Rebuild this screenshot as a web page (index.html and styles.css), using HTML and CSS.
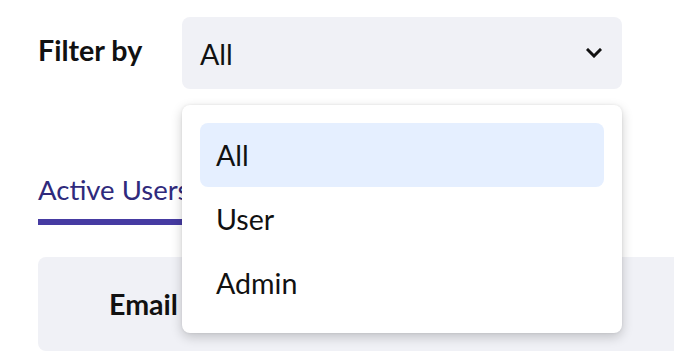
FILE: index.html
```html
<!DOCTYPE html>
<html lang="en">
<head>
  <meta charset="UTF-8">
  <meta name="viewport" content="width=device-width, initial-scale=1.0">
  <title>Users</title>
  <link rel="stylesheet" href="styles.css">
</head>
<body>
  <div class="page">
    <div class="filter-row">
      <span class="filter-label">Filter by</span>
      <div class="select">
        <div class="select-box">
          <span>All</span>
          <svg class="chevron" width="16" height="10" viewBox="0 0 16 10">
            <path d="M2 2 L8 8 L14 2" fill="none" stroke="#111" stroke-width="3" stroke-linecap="square"/>
          </svg>
        </div>
        <ul class="menu">
          <li class="menu-item selected">All</li>
          <li class="menu-item">User</li>
          <li class="menu-item">Admin</li>
        </ul>
      </div>
    </div>

    <div class="tabs">
      <div class="tab active">Active Users</div>
    </div>

    <div class="table-head">
      <span class="col">Email</span>
    </div>
  </div>
</body>
</html>
```

FILE: styles.css
```css
body {
  margin: 0;
  padding: 0;
  font-family: Lato, "Noto Sans", sans-serif;
  font-size: 28.6px;
  color: #111;
  background-color: #fff;
  overflow: hidden;
}

.page {
  padding: 17px 0 0 38px;
}

.filter-row {
  display: flex;
  align-items: center;
}

.filter-label {
  flex: 0 0 144px;
  font-weight: 700;
  margin-top: -6px;
}

.select {
  position: relative;
}

.select-box {
  width: 440px;
  height: 72px;
  box-sizing: border-box;
  padding: 0 20px 0 18px;
  display: flex;
  align-items: center;
  justify-content: space-between;
  background-color: #f0f1f6;
  border-radius: 8px;
}

.select-box span {
  margin-top: 2px;
}

.chevron {
  display: block;
}

.menu {
  position: absolute;
  top: 88px;
  left: 0;
  z-index: 10;
  width: 440px;
  box-sizing: border-box;
  margin: 0;
  padding: 18px;
  list-style: none;
  background-color: #fff;
  border-radius: 8px;
  box-shadow: 0 4px 12px rgba(0, 0, 0, 0.2), 0 0 3px rgba(0, 0, 0, 0.08);
}

.menu-item {
  height: 64px;
  display: flex;
  align-items: center;
  padding-left: 16px;
  border-radius: 8px;
}

.menu-item.selected {
  background-color: #e5efff;
}

.tabs {
  display: flex;
  margin-top: 84px;
}

.tab {
  font-size: 27.5px;
  line-height: 34px;
  color: #2f2a7c;
  padding-bottom: 12px;
  border-bottom: 6px solid #463ba2;
}

.table-head {
  margin-top: 32px;
  height: 94px;
  display: flex;
  align-items: center;
  background-color: #f0f1f6;
  border-radius: 8px 0 0 8px;
  padding-left: 71px;
}

.col {
  font-weight: 700;
}
```
